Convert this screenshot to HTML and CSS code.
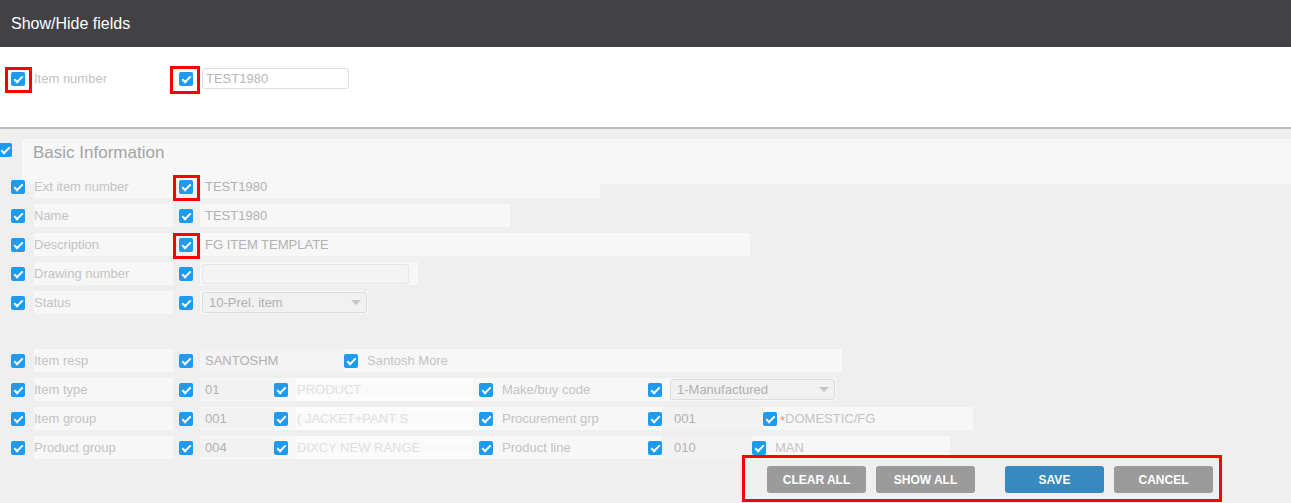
FILE: index.html
```html
<!DOCTYPE html>
<html lang="en">
<head>
<meta charset="utf-8">
<title>Show/Hide fields</title>
<link rel="stylesheet" href="styles.css">
</head>
<body>
<div class="dialog">
  <header class="dlg-head">
    <h1 class="dlg-title">Show/Hide fields</h1>
  </header>

  <section class="key-area">
    <div class="key-row">
      <span class="cb marked"></span>
      <span class="key-label">Item number</span>
      <span class="cb marked marked-wide"></span>
      <span class="key-input">TEST1980</span>
    </div>
  </section>

  <section class="form-area">
    <div class="group-head">
      <span class="cb cb-edge"></span>
      <div class="group-panel">
        <h2 class="group-title">Basic Information</h2>
      </div>
    </div>

    <div class="rows rows-top">
      <div class="row">
        <span class="cb"></span>
        <span class="lbl">Ext item number</span>
        <span class="cb cb-2 marked"></span>
        <div class="rest end-600"><span class="val">TEST1980</span></div>
      </div>
      <div class="row">
        <span class="cb"></span>
        <span class="lbl">Name</span>
        <span class="cb cb-2"></span>
        <div class="rest end-510"><span class="val">TEST1980</span></div>
      </div>
      <div class="row">
        <span class="cb"></span>
        <span class="lbl">Description</span>
        <span class="cb cb-2 marked"></span>
        <div class="rest end-750"><span class="val">FG ITEM TEMPLATE</span></div>
      </div>
      <div class="row">
        <span class="cb"></span>
        <span class="lbl">Drawing number</span>
        <span class="cb cb-2"></span>
        <div class="rest end-418"><span class="blank-input"></span></div>
      </div>
      <div class="row">
        <span class="cb"></span>
        <span class="lbl">Status</span>
        <span class="cb cb-2"></span>
        <div class="rest end-368"><span class="select sel-status">10-Prel. item<i class="caret"></i></span></div>
      </div>
    </div>

    <div class="rows rows-bottom">
      <div class="row">
        <span class="cb"></span>
        <span class="lbl">Item resp</span>
        <span class="cb cb-2"></span>
        <div class="rest end-842">
          <span class="val code-resp">SANTOSHM</span>
          <span class="cb"></span>
          <span class="val name-resp">Santosh More</span>
        </div>
      </div>
      <div class="row">
        <span class="cb"></span>
        <span class="lbl">Item type</span>
        <span class="cb cb-2"></span>
        <div class="rest end-836">
          <span class="val code-short">01</span>
          <span class="cb"></span>
          <span class="desc">PRODUCT</span>
          <span class="cb"></span>
          <span class="lbl2">Make/buy code</span>
          <span class="cb"></span>
          <span class="select sel-make">1-Manufactured<i class="caret"></i></span>
        </div>
      </div>
      <div class="row">
        <span class="cb"></span>
        <span class="lbl">Item group</span>
        <span class="cb cb-2"></span>
        <div class="rest end-973">
          <span class="val code-short">001</span>
          <span class="cb"></span>
          <span class="desc">( JACKET+PANT S</span>
          <span class="cb"></span>
          <span class="lbl2">Procurement grp</span>
          <span class="cb"></span>
          <span class="val code-proc">001</span>
          <span class="cb"></span>
          <span class="ast">*</span>
          <span class="val val-after-ast">DOMESTIC/FG</span>
        </div>
      </div>
      <div class="row">
        <span class="cb"></span>
        <span class="lbl">Product group</span>
        <span class="cb cb-2"></span>
        <div class="rest end-950">
          <span class="val code-short">004</span>
          <span class="cb"></span>
          <span class="desc">DIXCY NEW RANGE</span>
          <span class="cb"></span>
          <span class="lbl2">Product line</span>
          <span class="cb"></span>
          <span class="val code-line">010</span>
          <span class="cb"></span>
          <span class="val name-line">MAN</span>
        </div>
      </div>
    </div>

    <div class="footer-wrap">
      <div class="footer">
        <button class="btn">CLEAR ALL</button>
        <button class="btn">SHOW ALL</button>
        <button class="btn btn-save">SAVE</button>
        <button class="btn">CANCEL</button>
      </div>
    </div>
  </section>
</div>
</body>
</html>
```

FILE: styles.css
```css
* { box-sizing: border-box; }

html, body {
  margin: 0;
  padding: 0;
  background: #efefef;
  overflow: hidden;
  font-family: "Liberation Sans", Arial, sans-serif;
  font-size: 13px;
}

.dialog { width: 1291px; }

.dlg-head {
  height: 47px;
  background: #414146;
  display: flex;
  align-items: center;
  padding-left: 11px;
}
.dlg-title {
  margin: 0;
  font-size: 16px;
  font-weight: normal;
  color: #ffffff;
}

/* checkbox */
.cb {
  flex: none;
  position: relative;
  display: block;
  width: 14px;
  height: 14px;
  border-radius: 2px;
  background: #1d9bf0;
}
.cb::after {
  content: "";
  position: absolute;
  left: 5px;
  top: 2px;
  width: 3px;
  height: 7px;
  border: solid #ffffff;
  border-width: 0 2px 2px 0;
  transform: rotate(45deg);
}
/* red annotation frame */
.marked::before {
  content: "";
  position: absolute;
  top: -5px;
  right: -7px;
  bottom: -7px;
  left: -6px;
  border: 3px solid #ff0000;
}
.marked-wide::before { left: -9px; top: -6px; bottom: -8px; }

/* key area */
.key-area {
  height: 82px;
  padding-top: 21px;
  background: #ffffff;
  border-bottom: 2px solid #bcbcbc;
}
.key-row {
  display: flex;
  align-items: center;
  height: 21px;
  padding-left: 11px;
}
.key-label {
  flex: none;
  width: 145px;
  margin-left: 9px;
  color: #c3c3c3;
}
.key-input {
  margin-left: 9px;
  width: 147px;
  height: 21px;
  border: 1px solid #dedede;
  border-radius: 3px;
  padding-left: 3px;
  display: flex;
  align-items: center;
  color: #b5b5b5;
}

/* form */
.form-area { padding-top: 10px; }

.group-head {
  display: flex;
  height: 45px;
}
.cb-edge {
  margin-left: -2px;
  margin-top: 4px;
}
.group-panel {
  flex: 1;
  margin-left: 10px;
  height: 45px;
  background: #f7f7f7;
  padding-left: 11px;
  padding-top: 2px;
}
.group-title {
  margin: 0;
  font-size: 17px;
  font-weight: normal;
  line-height: 24px;
  color: #a4a4a4;
}

.rows {
  display: flex;
  flex-direction: column;
  gap: 6px;
}
.rows-top { margin-top: -9px; }
.rows-bottom { margin-top: 35px; }

.row {
  display: flex;
  align-items: center;
  height: 23px;
  padding-left: 11px;
  white-space: nowrap;
}
.lbl {
  flex: none;
  width: 139px;
  height: 23px;
  margin-left: 9px;
  display: flex;
  align-items: center;
  background: #f7f7f7;
  color: #c3c3c3;
}
.cb-2 { margin-left: 6px; }
.rest {
  flex: none;
  margin-left: 7px;
  height: 23px;
  display: flex;
  align-items: center;
  background: #f7f7f7;
}
.end-600 { width: 400px; }
.end-510 { width: 310px; }
.end-750 { width: 550px; }
.end-418 { width: 218px; }
.end-368 { width: 168px; }
.end-842 { width: 642px; }
.end-836 { width: 636px; }
.end-973 { width: 773px; }
.end-950 { width: 750px; }

.lbl2 {
  flex: none;
  width: 155px;
  padding-left: 9px;
  color: #c3c3c3;
}
.val {
  flex: none;
  padding-left: 5px;
  color: #b4b0b4;
}
.code-resp { width: 144px; height: 23px; display: flex; align-items: center; background: #f3f3f3; }
.name-resp { padding-left: 9px; color: #c3c3c3; }
.code-short { width: 74px; height: 21px; display: flex; align-items: center; background: #f2f2f2; }
.code-proc { width: 101px; padding-left: 12px; height: 23px; display: flex; align-items: center; background: #f2f2f2; }
.code-line { width: 90px; padding-left: 12px; height: 23px; display: flex; align-items: center; background: #f2f2f2; }
.name-line { padding-left: 9px; color: #c3c3c3; }

.desc {
  flex: none;
  margin-left: 8px;
  margin-right: 6px;
  width: 177px;
  height: 23px;
  padding-left: 1px;
  display: flex;
  align-items: center;
  background: linear-gradient(180deg, #fdfdfd 0%, #f9f9f9 50%, #fdfdfd 100%);
  color: #e0e0e0;
}

.ast {
  flex: none;
  margin-left: 3px;
  color: #f08a8a;
  align-self: flex-end;
  line-height: 18px;
}
.val-after-ast { padding-left: 0; color: #c3c3c3; }

.blank-input {
  flex: none;
  margin-left: 2px;
  width: 207px;
  height: 20px;
  border: 1px solid #e6e6e6;
  border-radius: 3px;
  background: #f4f4f4;
}

.select {
  flex: none;
  width: 165px;
  height: 21px;
  display: flex;
  align-items: center;
  justify-content: space-between;
  padding: 0 5px 0 6px;
  border: 1px solid #dcdcdc;
  border-radius: 3px;
  background: #f1f1f1;
  color: #b0b0b0;
}
.sel-status { margin-left: 2px; }
.sel-make { margin-left: 8px; }
.caret {
  display: block;
  width: 0;
  height: 0;
  border-left: 5px solid transparent;
  border-right: 5px solid transparent;
  border-top: 5px solid #c6c6c6;
}

/* footer */
.footer-wrap {
  display: flex;
  justify-content: flex-end;
  margin-top: -4px;
  padding-right: 69px;
}
.footer {
  display: flex;
  gap: 10px;
  border: 3px solid #ff0000;
  padding: 8px 6px 6px 22px;
}
.btn {
  width: 99px;
  height: 27px;
  border: none;
  border-radius: 3px;
  background: #9b9b9b;
  color: #ffffff;
  font-family: "Liberation Sans", Arial, sans-serif;
  font-size: 12px;
  font-weight: bold;
  padding: 0;
}
.btn-save {
  margin-left: 20px;
  background: #3789bf;
}
```
